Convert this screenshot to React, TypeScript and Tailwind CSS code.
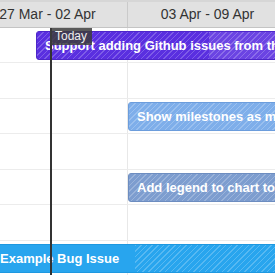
const stripes =
  "[background-image:repeating-linear-gradient(135deg,rgba(255,255,255,0.22)_0px,rgba(255,255,255,0.22)_1px,transparent_1px,transparent_4px)]";

type Bar = {
  label: string;
  start: number; // px from the visible timeline's first day
  width: number;
  color: string;
  border: string;
  done?: number;
  doneStriped?: boolean;
};

const rows: (Bar | null)[] = [
  { label: "Support adding Github issues from the API", start: 68, width: 360, color: "bg-[#5a2fe0]", border: "border-[#4d26c8]", done: 172, doneStriped: true },
  null,
  { label: "Show milestones as markers", start: 160, width: 260, color: "bg-[#7eaeea]", border: "border-[#6c9ddc]" },
  null,
  { label: "Add legend to chart to explain colours", start: 160, width: 260, color: "bg-[#7d9dcf]", border: "border-[#6d8dc0]" },
  null,
  { label: "Example Bug Issue", start: 23, width: 400, color: "bg-[#28a5ee]", border: "border-[#1e98e0]", done: 143 },
];

function GanttBar({ bar }: { bar: Bar }) {
  return (
    <div
      className={`relative shrink-0 flex h-[29px] rounded-[3px] border overflow-hidden ${bar.color} ${bar.border}`}
      style={{ marginLeft: bar.start, width: bar.width }}
    >
      {/* progress / remaining split */}
      <div className="absolute inset-0 flex">
        {bar.done !== undefined ? (
          <>
            <div className={`shrink-0 ${bar.doneStriped ? stripes : ""}`} style={{ width: bar.done }} />
            <div className={`flex-1 ${stripes} ${bar.doneStriped ? "bg-white/10" : ""}`} />
          </>
        ) : (
          <div className={`flex-1 ${stripes}`} />
        )}
      </div>
      <span className="relative whitespace-nowrap pl-2 text-[13px] font-bold leading-[27px] text-white">
        {bar.label}
      </span>
    </div>
  );
}

export default function App() {
  return (
    <div className="relative w-[275px] h-[275px] overflow-hidden bg-white font-['Liberation_Sans',Arial,sans-serif]">
      <div className="ml-[-32px] w-[320px]">
        {/* Week header */}
        <div className="flex h-[28px] bg-[#e1e1e1] border-b border-[#c4c4c4] border-t-2 border-t-[#d6d6d6]">
          <div className="w-[160px] border-r border-[#cacaca] flex items-center justify-center text-[14px] text-[#333]">
            27 Mar - 02 Apr
          </div>
          <div className="w-[160px] border-r border-[#cacaca] flex items-center justify-center text-[14px] text-[#333]">
            03 Apr - 09 Apr
          </div>
        </div>

        {/* Rows */}
        {rows.map((bar, i) => (
          <div
            key={i}
            className={`relative flex items-center border-b border-[#ececec] ${i % 2 === 0 ? "h-[35px]" : "h-[36px]"}`}
          >
            <div className="absolute inset-0 flex">
              <div className="w-[160px] border-r border-[#e8e8e8]" />
              <div className="w-[160px] border-r border-[#e8e8e8]" />
            </div>
            {bar && <GanttBar bar={bar} />}
          </div>
        ))}
      </div>

      {/* Today marker */}
      <div className="absolute left-[50px] top-[28px] bottom-0 w-[2px] bg-[#333]" />
      <div className="absolute left-[50px] top-[28px] h-[17px] w-[42px] bg-[#3c3c3c]/85 text-[12px] leading-[17px] text-[#eee] pl-[5px]">
        Today
      </div>
    </div>
  );
}
